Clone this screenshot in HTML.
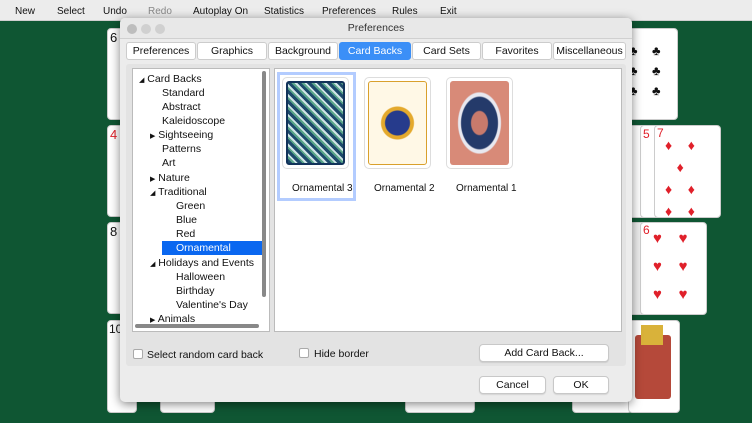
<!DOCTYPE html>
<html><head><meta charset="utf-8"><style>
*{box-sizing:border-box;margin:0;padding:0}
body{width:752px;height:423px;overflow:hidden;position:relative;background:#0f5633;font-family:"Liberation Sans",sans-serif;font-size:11px;color:#111}
.menu{position:absolute;left:0;top:0;width:752px;height:21px;background:#ececec;border-bottom:1px solid #cfcfcf}
.menu span{position:absolute;top:6px;font-size:10px}
.card{position:absolute;background:#fff;border-radius:4px;border:1px solid #ccc}
.r{color:#e0202a}
.dlg{position:absolute;left:120px;top:18px;width:512px;height:384px;background:#ececec;border-radius:5px;box-shadow:0 2px 10px rgba(0,0,0,.5)}
.title{height:21px;border-bottom:1px solid #d0d0d0;text-align:center;font-size:10.5px;line-height:21px;color:#333;background:#e8e8e8;border-radius:5px 5px 0 0}
.dot{position:absolute;top:6px;width:10px;height:10px;border-radius:50%;background:#d0d0d0}
.tab{position:absolute;top:24px;height:18px;background:#fff;border:1px solid #ccc;border-radius:3px;text-align:center;line-height:17px;font-size:10.5px}
.panel{position:absolute;left:6px;top:46px;width:500px;height:302px;background:#e3e3e3;border-radius:3px}
.tree{position:absolute;left:12px;top:50px;width:138px;height:264px;background:#fff;border:1px solid #bbb}
.tree div{position:absolute;font-size:10.5px;white-space:nowrap}
.right{position:absolute;left:154px;top:50px;width:348px;height:264px;background:#fff;border:1px solid #bbb}
.btn{position:absolute;background:#fff;border:1px solid #c8c8c8;border-radius:4px;text-align:center;font-size:10.5px;line-height:17px;box-shadow:0 1px 1px rgba(0,0,0,.1)}
.cb{position:absolute;width:10px;height:10px;border:1px solid #aaa;border-radius:2px;background:#fff}
.lbl{position:absolute;font-size:10px}
.th{position:absolute;top:8px;width:67px;height:92px;border-radius:5px;border:1px solid #ddd;padding:3px;background:#fff}
.th div{width:100%;height:100%;border-radius:3px}
</style></head><body>
<div class="menu">
<span style="left:15px">New</span><span style="left:57px">Select</span><span style="left:103px">Undo</span><span style="left:148px;color:#888">Redo</span><span style="left:193px">Autoplay On</span><span style="left:264px">Statistics</span><span style="left:322px">Preferences</span><span style="left:392px">Rules</span><span style="left:440px">Exit</span>
</div>
<div class="card" style="left:107px;top:28px;width:30px;height:92px"><b style="position:absolute;left:2px;top:1px;font-size:13px;font-weight:normal">6</b></div>
<div class="card" style="left:107px;top:125px;width:30px;height:92px"><b class="r" style="position:absolute;left:2px;top:1px;font-size:13px;font-weight:normal">4</b></div>
<div class="card" style="left:107px;top:222px;width:30px;height:92px"><b style="position:absolute;left:2px;top:1px;font-size:13px;font-weight:normal">8</b></div>
<div class="card" style="left:107px;top:320px;width:30px;height:93px"><b style="position:absolute;left:1px;top:1px;font-size:12px;font-weight:normal">10</b></div>
<div class="card" style="left:160px;top:380px;width:55px;height:33px"></div>
<div class="card" style="left:405px;top:380px;width:70px;height:33px"></div>
<div class="card" style="left:572px;top:380px;width:60px;height:33px"></div>
<div class="card" style="left:610px;top:28px;width:68px;height:92px;font-size:13px;line-height:20px;padding:12px 0 0 18px">♣&nbsp;&nbsp;&nbsp;&nbsp;♣<br>♣&nbsp;&nbsp;&nbsp;&nbsp;♣<br>♣&nbsp;&nbsp;&nbsp;&nbsp;♣</div>
<div class="card" style="left:628px;top:125px;width:40px;height:93px"></div>
<div class="card" style="left:640px;top:125px;width:40px;height:93px"><span class="r" style="position:absolute;left:2px;top:1px;font-size:12px">5</span></div>
<div class="card r" style="left:654px;top:125px;width:67px;height:93px;font-size:14px;line-height:22px;padding:8px 0 0 10px">♦&nbsp;&nbsp;&nbsp;&nbsp;♦<br>&nbsp;&nbsp;&nbsp;♦<br>♦&nbsp;&nbsp;&nbsp;&nbsp;♦<br>♦&nbsp;&nbsp;&nbsp;&nbsp;♦<span style="position:absolute;left:2px;top:1px;font-size:12px;line-height:12px">7</span></div>
<div class="card" style="left:628px;top:222px;width:40px;height:93px;background:#eee"></div>
<div class="card r" style="left:640px;top:222px;width:67px;height:93px;font-size:15px;line-height:28px;padding:2px 0 0 12px">♥&nbsp;&nbsp;&nbsp;&nbsp;♥<br>♥&nbsp;&nbsp;&nbsp;&nbsp;♥<br>♥&nbsp;&nbsp;&nbsp;&nbsp;♥<span style="position:absolute;left:2px;top:1px;font-size:12px;line-height:12px">6</span></div>
<div class="card" style="left:628px;top:320px;width:52px;height:93px;overflow:hidden"><div style="position:absolute;left:6px;top:14px;width:36px;height:64px;background:#b5493a;border-radius:3px"></div><div style="position:absolute;left:12px;top:4px;width:22px;height:20px;background:#d9b23a"></div></div>
<div class="dlg">
<div class="title">Preferences</div>
<div class="dot" style="left:7px;background:#bdbdbd"></div><div class="dot" style="left:21px"></div><div class="dot" style="left:35px"></div>
<div class="tab" style="left:6px;width:70px">Preferences</div>
<div class="tab" style="left:77px;width:70px">Graphics</div>
<div class="tab" style="left:148px;width:70px">Background</div>
<div class="tab" style="left:219px;width:72px;background:#3b8ff7;border-color:#3b8ff7;color:#fff">Card Backs</div>
<div class="tab" style="left:292px;width:69px">Card Sets</div>
<div class="tab" style="left:362px;width:70px">Favorites</div>
<div class="tab" style="left:433px;width:73px">Miscellaneous</div>
<div class="panel"></div>
<div class="tree">
<div style="left:6px;top:4px"><span style="font-size:7px">◢</span> Card Backs</div>
<div style="left:29px;top:18px">Standard</div>
<div style="left:29px;top:32px">Abstract</div>
<div style="left:29px;top:46px">Kaleidoscope</div>
<div style="left:17px;top:60px"><span style="font-size:7px">▶</span> Sightseeing</div>
<div style="left:29px;top:74px">Patterns</div>
<div style="left:29px;top:88px">Art</div>
<div style="left:17px;top:103px"><span style="font-size:7px">▶</span> Nature</div>
<div style="left:17px;top:117px"><span style="font-size:7px">◢</span> Traditional</div>
<div style="left:43px;top:131px">Green</div>
<div style="left:43px;top:145px">Blue</div>
<div style="left:43px;top:159px">Red</div>
<div style="left:29px;top:172px;width:100px;height:14px;background:#0a67f0;color:#fff;padding-left:14px;line-height:14px">Ornamental</div>
<div style="left:17px;top:188px"><span style="font-size:7px">◢</span> Holidays and Events</div>
<div style="left:43px;top:202px">Halloween</div>
<div style="left:43px;top:216px">Birthday</div>
<div style="left:43px;top:230px">Valentine's Day</div>
<div style="left:17px;top:244px"><span style="font-size:7px">▶</span> Animals</div>
<div style="left:129px;top:2px;width:4px;height:226px;background:#888;border-radius:2px"></div>
<div style="left:2px;top:255px;width:124px;height:4px;background:#888;border-radius:2px"></div>
</div>
<div class="right">
<div style="position:absolute;left:2px;top:3px;width:79px;height:129px;border:3px solid #b3ccff"></div>
<div class="th" style="left:7px"><div style="background:repeating-linear-gradient(45deg,#1d4a6b 0 3px,#5aa58a 3px 5px,#cfe3e6 5px 7px);border:2px solid #12335a"></div></div>
<div class="th" style="left:89px"><div style="background:radial-gradient(circle,#263b8c 0 12px,#e4a92c 13px 16px,#fff8e6 17px);border:1px solid #d9a02c"></div></div>
<div class="th" style="left:171px"><div style="background:radial-gradient(ellipse,#c87a6c 0 8px,#243a6a 9px 18px,#e8e8f0 19px 21px,#d88a78 22px)"></div></div>
<div class="lbl" style="left:17px;top:114px">Ornamental 3</div>
<div class="lbl" style="left:99px;top:114px">Ornamental 2</div>
<div class="lbl" style="left:181px;top:114px">Ornamental 1</div>
</div>
<div class="cb" style="left:13px;top:331px"></div><div class="lbl" style="left:27px;top:331px;font-size:10.5px">Select random card back</div>
<div class="cb" style="left:179px;top:330px"></div><div class="lbl" style="left:194px;top:330px;font-size:10.5px">Hide border</div>
<div class="btn" style="left:359px;top:326px;width:130px;height:18px">Add Card Back...</div>
<div class="btn" style="left:359px;top:358px;width:67px;height:18px">Cancel</div>
<div class="btn" style="left:433px;top:358px;width:56px;height:18px">OK</div>
</div>
</body></html>
